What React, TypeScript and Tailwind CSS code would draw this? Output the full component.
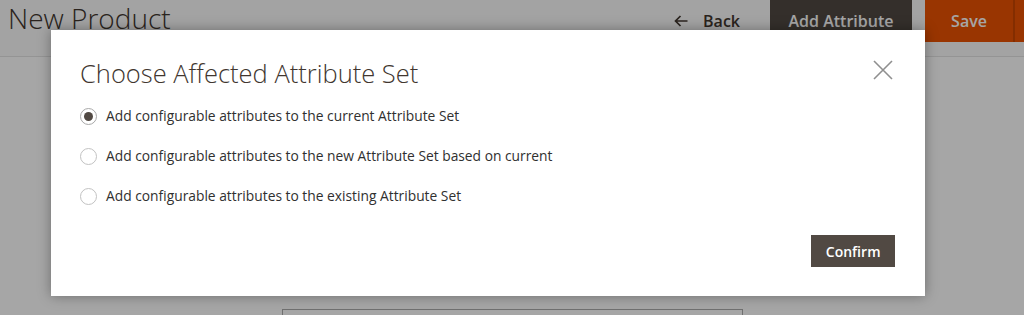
import React from 'react'

const options = [
  'Add configurable attributes to the current Attribute Set',
  'Add configurable attributes to the new Attribute Set based on current',
  'Add configurable attributes to the existing Attribute Set',
]

function Radio({ checked }: { checked: boolean }) {
  return (
    <span
      className={`flex items-center justify-center w-[17px] h-[17px] rounded-full border bg-white ${
        checked ? 'border-[#a8a8a8]' : 'border-[#c2c2c2]'
      }`}
    >
      {checked && <span className="w-[9px] h-[9px] rounded-full bg-[#514943]" />}
    </span>
  )
}

export default function App() {
  return (
    <div className="relative h-[315px] overflow-hidden bg-white font-['Open_Sans',sans-serif] text-[#41362f]">
      {/* page behind the modal */}
      <div className="flex items-start h-[57px] border-b border-[#e3e3e3] bg-[#fafafa]">
        <h1 className="pl-[8px] mt-[3px] text-[28px] leading-[30px] font-light text-[#41362f]">New Product</h1>
        <div className="flex items-start ml-auto">
          <button className="flex items-center h-[42px] gap-[15px] mr-[30px] text-[16px] font-semibold text-[#41362f]">
            <svg width="14" height="12" viewBox="0 0 14 12" fill="none" stroke="currentColor" strokeWidth={1.7}>
              <path d="M13.5 6H1.5M6.5 1 1.5 6l5 5" />
            </svg>
            Back
          </button>
          <button className="h-[42px] w-[142px] mr-[13px] bg-[#514943] text-[16px] font-semibold text-white">
            Add Attribute
          </button>
          <div className="flex h-[42px]">
            <button className="w-[88px] bg-[#eb5202] text-[16px] font-semibold text-white">Save</button>
            <span className="w-[2px] bg-[#c94600]" />
            <span className="w-[9px] bg-[#eb5202]" />
          </div>
        </div>
      </div>
      <div className="flex justify-center pt-[252px]">
        <div className="w-[461px] h-[60px] border border-[#adadad]" />
      </div>

      {/* overlay */}
      <div className="absolute inset-0 bg-black/35" />

      {/* modal */}
      <div className="absolute left-[51px] top-[30px] w-[874px] h-[266px] bg-white shadow-[0_0_12px_rgba(0,0,0,0.35)] flex flex-col px-[29px] pt-[28px]">
        <h2 className="text-[25.5px] leading-[30px] font-light text-[#41362f]">Choose Affected Attribute Set</h2>
        <button className="absolute right-[32px] top-[30px] text-[#8f8f8f]">
          <svg width="20" height="20" viewBox="0 0 20 20" fill="none" stroke="currentColor" strokeWidth={1.6}>
            <path d="M1 1l18 18M19 1 1 19" />
          </svg>
        </button>
        <div className="flex flex-col mt-[8px]">
          {options.map((label, i) => (
            <label key={label} className="flex items-center h-[40px] gap-[9px] text-[13.8px] text-[#303030]">
              <Radio checked={i === 0} />
              {label}
            </label>
          ))}
        </div>
        <div className="flex justify-end mt-[19px] pr-[1px]">
          <button className="h-[32px] px-[13.5px] bg-[#514943] border border-[#514943] text-[14px] font-semibold text-white">
            Confirm
          </button>
        </div>
      </div>
    </div>
  )
}
